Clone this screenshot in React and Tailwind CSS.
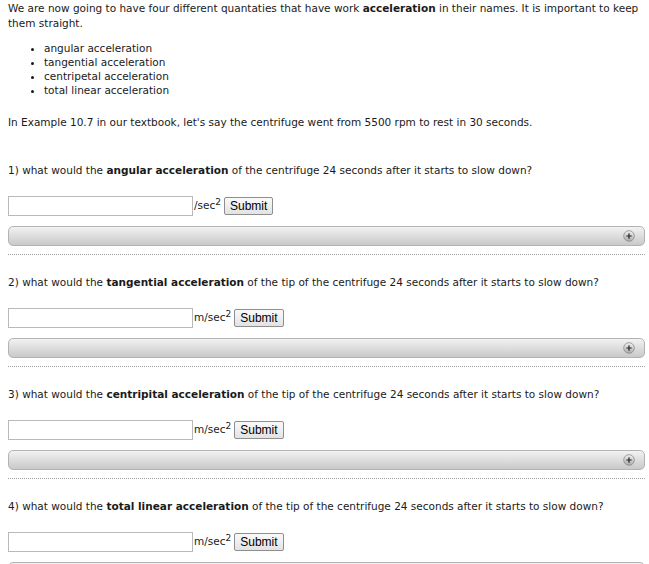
const questions = [
  { n: 1, before: "what would the ", bold: "angular acceleration", after: " of the centrifuge 24 seconds after it starts to slow down?", unit: "/sec" },
  { n: 2, before: "what would the ", bold: "tangential acceleration", after: " of the tip of the centrifuge 24 seconds after it starts to slow down?", unit: "m/sec" },
  { n: 3, before: "what would the ", bold: "centripital acceleration", after: " of the tip of the centrifuge 24 seconds after it starts to slow down?", unit: "m/sec" },
  { n: 4, before: "what would the ", bold: "total linear acceleration", after: " of the tip of the centrifuge 24 seconds after it starts to slow down?", unit: "m/sec" },
];

function PlusIcon() {
  return (
    <svg width="12" height="12" viewBox="0 0 12 12">
      <defs>
        <linearGradient id="pg" x1="0" y1="0" x2="0" y2="1">
          <stop offset="0" stopColor="#f4f4f4" />
          <stop offset="1" stopColor="#a9a9a9" />
        </linearGradient>
      </defs>
      <circle cx="6" cy="6" r="5.3" fill="url(#pg)" stroke="#8a8a8a" strokeWidth="0.8" />
      <path d="M6 3.3v5.4M3.3 6h5.4" stroke="#222" strokeWidth="1.2" />
    </svg>
  );
}

function Question({ q, first }) {
  return (
    <div>
      <p className={first ? "leading-[15px] mt-[33px]" : "leading-[15px] mt-[20px]"}>
        {q.n}) {q.before}
        <b>{q.bold}</b>
        {q.after}
      </p>
      <div className="flex items-center mt-[18px] h-5">
        <input
          type="text"
          className="w-[185px] h-5 border border-[#b9b9b9] bg-white outline-none px-1"
        />
        <span className="text-[#222] ml-[1px]">
          {q.unit}
          <sup className="text-[9px]">2</sup>
        </span>
        <button
          type="button"
          className="ml-[3px] h-[18px] px-[5px] border border-[#8e8e8e] rounded-[2px] bg-gradient-to-b from-[#fafafa] to-[#e2e2e2] text-[12px] text-black leading-none"
          style={{ fontFamily: '"Liberation Sans", Arial, sans-serif' }}
        >
          Submit
        </button>
      </div>
      <div className="mt-[10px] h-5 rounded-[5px] border border-[#b3b3b3] bg-gradient-to-b from-[#f2f2f2] to-[#c9c9c9] flex items-center justify-end pr-[9px]">
        <PlusIcon />
      </div>
      <div className="mt-[8px] border-b border-dotted border-[#9a9a9a]" />
    </div>
  );
}

export default function App() {
  return (
    <div
      className="bg-white text-[#1a1a1a] text-[10.5px] pl-2 pr-1 pt-[1px] min-h-screen"
      style={{ fontFamily: '"DejaVu Sans", Verdana, sans-serif' }}
    >
      <p className="leading-[15px] pr-1">
        We are now going to have four different quantaties that have work <b>acceleration</b> in their names. It is
        important to keep them straight.
      </p>
      <ul className="list-disc pl-[36px] mt-[10px] leading-[14px]">
        <li>angular acceleration</li>
        <li>tangential acceleration</li>
        <li>centripetal acceleration</li>
        <li>total linear acceleration</li>
      </ul>
      <p className="leading-[15px] mt-[18px]">
        In Example 10.7 in our textbook, let's say the centrifuge went from 5500 rpm to rest in 30 seconds.
      </p>
      {questions.map((q, i) => (
        <Question key={q.n} q={q} first={i === 0} />
      ))}
    </div>
  );
}
